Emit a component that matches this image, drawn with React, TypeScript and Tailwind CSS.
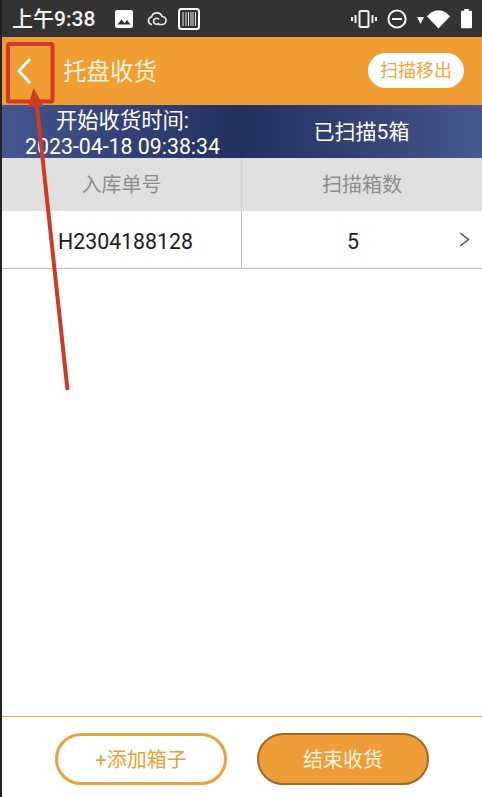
const cjk = "font-['Roboto','Noto_Sans_CJK_SC',sans-serif]";

function StatusIcons() {
  return (
    <div className="flex items-center">
      {/* vibrate */}
      <svg width="26" height="22" viewBox="0 0 26 22" fill="none" stroke="#f2f2f2" className="mr-[10px]">
        <rect x="8.5" y="3" width="9" height="16" rx="1.5" strokeWidth="2" />
        <path d="M4.5 7v8M21.5 7v8" strokeWidth="2" />
        <path d="M1 9v4M25 9v4" strokeWidth="2" />
      </svg>
      {/* dnd */}
      <svg width="20" height="20" viewBox="0 0 20 20" fill="none" stroke="#f2f2f2" strokeWidth="2" className="mr-[10px]">
        <circle cx="10" cy="10" r="8.6" />
        <path d="M5 10h10" />
      </svg>
      <svg width="7" height="7" viewBox="0 0 7 7" fill="#f2f2f2" className="mr-[3px] mt-[4px]">
        <path d="M0 0h7L3.500 7z" />
      </svg>
      {/* wifi */}
      <svg width="23" height="20" viewBox="0 0 24 20" fill="#fff" className="mr-[11px]">
        <path d="M0 7.500C3 3 7.500 1 12 1s9 2 12 6.500L12 20z" />
      </svg>
      {/* battery */}
      <svg width="11" height="21" viewBox="0 0 12 21" fill="#fff">
        <path d="M3.500 0h5v2H11a1 1 0 0 1 1 1v17a1 1 0 0 1-1 1H1a1 1 0 0 1-1-1V3a1 1 0 0 1 1-1h2.500z" />
      </svg>
    </div>
  );
}

function StatusBar() {
  return (
    <div className="flex items-center justify-between h-[37px] shrink-0 bg-[#333333] pl-[10px] pr-[10px]">
      <div className="flex items-center">
        <span className="text-[21px] font-medium text-[#f5f5f5] whitespace-nowrap pt-[2px]">上午9:38</span>
        {/* image */}
        <svg width="18" height="18" viewBox="0 0 18 18" className="ml-[20px]">
          <rect width="18" height="18" rx="2" fill="#fff" />
          <path d="M2.500 14.500l4-5 3 3.500 2.500-3 3.500 4.500z" fill="#333333" />
        </svg>
        {/* cloud sync */}
        <svg width="20" height="16" viewBox="0 0 20 16" fill="none" stroke="#e8e8e8" strokeWidth="1.700" className="ml-[14px]">
          <path d="M5 13.500a3.800 3.800 0 0 1-.500-7.500A5.500 5.500 0 0 1 15 5.500a4 4 0 0 1 0 8h-4" />
          <path d="M12 8.500a3 3 0 1 0 0 3.500" />
        </svg>
        {/* barcode */}
        <svg width="22" height="22" viewBox="0 0 22 22" fill="none" className="ml-[11px]">
          <rect x="1" y="1" width="20" height="20" rx="2.500" stroke="#fff" strokeWidth="2" />
          <path d="M5 4v14M8 4v14M10.500 4v14M13 4v14M15 4v14M17.500 4v14" stroke="#e6e6e6" strokeWidth="1" />
        </svg>
      </div>
      <StatusIcons />
    </div>
  );
}

function Header() {
  return (
    <div className="flex items-center h-[68px] shrink-0 bg-[#f09d33] pl-[14px] pr-[18px]">
      <svg width="16" height="28" viewBox="0 0 16 28" fill="none" stroke="#fff" strokeWidth="3">
        <path d="M14 2L3 14l11 12" />
      </svg>
      <span className="ml-[31px] flex-1 pt-[4px] text-[23.5px] text-[#fff3dc]">托盘收货</span>
      <button className="mb-[2px] h-[35px] w-[96px] rounded-full bg-white text-[18px] text-[#f0a63e]">扫描移出</button>
    </div>
  );
}

function Banner() {
  return (
    <div className="flex h-[53px] shrink-0 bg-gradient-to-r from-[#46568f] via-[#222f5f] to-[#47568d] text-white">
      <div className="w-[241px] pt-[3px] text-center text-[21.3px] leading-[26px]">
        <div>开始收货时间:</div>
        <div>2023-04-18 09:38:34</div>
      </div>
      <div className="flex-1 flex items-center justify-center text-[21px] pr-[2px] pt-[2px]">已扫描5箱</div>
    </div>
  );
}

function Table() {
  return (
    <div>
      <div className="flex h-[53px] bg-[#e0e0e0] text-[20px] text-[#8c8c8c]">
        <div className="w-[240px] flex items-center justify-center border-r border-[#d2d2d2]">入库单号</div>
        <div className="flex-1 flex items-center justify-center">扫描箱数</div>
      </div>
      <div className="flex h-[58px] bg-white border-b border-[#bdbdbd] text-[21.3px] text-[#1c1c1c]">
        <div className="w-[240px] flex items-center justify-center border-r border-[#bdbdbd] pl-[8px] pt-[4px]">H2304188128</div>
        <div className="relative flex-1 flex items-center justify-center pr-[18px] pt-[4px]">
          5
          <svg width="11" height="15" viewBox="0 0 11 15" fill="none" stroke="#555555" strokeWidth="1.500" className="absolute right-[12px] top-[21px]">
            <path d="M1 1l8.500 6.500L1 14" />
          </svg>
        </div>
      </div>
    </div>
  );
}

function Footer() {
  return (
    <div className="flex h-[81px] shrink-0 gap-[30px] border-t border-[#e8a54a] bg-white pl-[53px] pt-[16px]">
      <button className="h-[52px] w-[172px] rounded-full border-[3px] border-[#eba23c] bg-white pt-[2px] text-[20px] text-[#eb9f35]">+添加箱子</button>
      <button className="h-[52px] w-[172px] rounded-full border-2 border-[#9a6a26] bg-[#ef9e37] pt-[2px] text-[20px] text-[#fff3dc]">结束收货</button>
    </div>
  );
}

export default function App() {
  return (
    <div className={`relative flex h-[797px] w-[482px] flex-col overflow-hidden border-l-2 border-[#222222] bg-white ${cjk}`}>
      <StatusBar />
      <Header />
      <Banner />
      <Table />
      <div className="flex-1" />
      <Footer />

      {/* red annotation drawn on top of the screenshot */}
      <svg width="482" height="797" viewBox="0 0 482 797" fill="none" className="absolute left-[-2px] top-0 pointer-events-none">
        <rect x="8" y="44" width="44.500" height="57.500" rx="1.500" stroke="#cf3a24" strokeWidth="4" />
        <path d="M67.500 390L36.500 102" stroke="#cf3a24" strokeWidth="4" />
        <path d="M33.500 88L43.500 106L28 107z" fill="#cf3a24" />
      </svg>
    </div>
  );
}
